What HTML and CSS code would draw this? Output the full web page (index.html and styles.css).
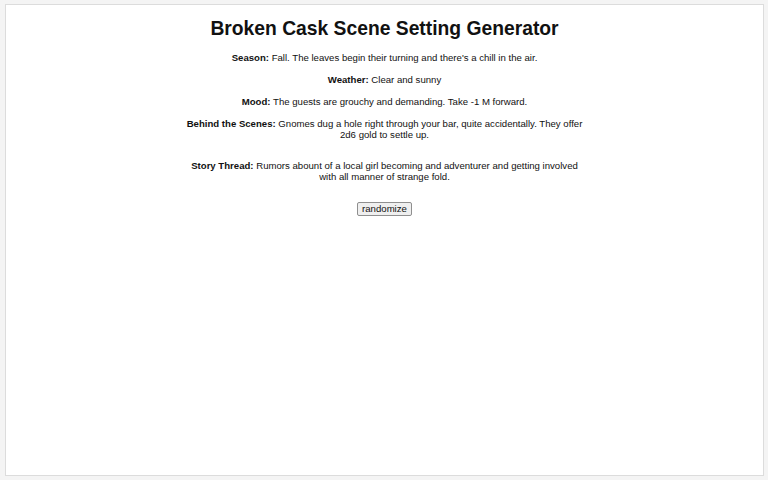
FILE: index.html
```html
<!DOCTYPE html>
<html lang="en-US">
<head>
    <meta charset="UTF-8">
    <title>Broken Cask Scene Setting Generator</title>
    <link rel="stylesheet" href="styles.css">
</head>
<body>
    <div class="page">
        <h1 class="title">Broken Cask Scene Setting Generator</h1>
        <div class="scene">
            <p><b>Season:</b> Fall. The leaves begin their turning and there's a chill in the air.</p>
            <p><b>Weather:</b> Clear and sunny</p>
            <p><b>Mood:</b> The guests are grouchy and demanding. Take -1 M forward.</p>
            <p><b>Behind the Scenes:</b> Gnomes dug a hole right through your bar, quite accidentally. They offer 2d6 gold to settle up.</p>
            <p class="thread"><b>Story Thread:</b> Rumors abount of a local girl becoming and adventurer and getting involved with all manner of strange fold.</p>
            <div class="actions">
                <button class="roll-btn">randomize</button>
            </div>
        </div>
    </div>
</body>
</html>
```

FILE: styles.css
```css
html, body {
    height: 100%;
}

body {
    margin: 0;
    padding: 4px 4px 4px 5px;
    box-sizing: border-box;
    background-color: #f4f4f4;
    font-family: 'Liberation Sans', Arial, sans-serif;
    color: #111;
}

.page {
    height: 100%;
    box-sizing: border-box;
    background-color: #fff;
    border: 1px solid #dcdcdc;
    text-align: center;
}

.title {
    font-size: 19.3px;
    margin: 13px 0 12px;
}

.scene {
    max-width: 400px;
    margin: 0 auto;
    font-size: 9.6px;
    line-height: 11px;
}

.scene p {
    margin: 11px 0;
}

/* blank line before the story thread */
.scene p.thread {
    margin-top: 20px;
}

.actions {
    margin-top: 20px;
}

.roll-btn {
    font-family: 'Liberation Sans', Arial, sans-serif;
    font-size: 9.6px;
    line-height: 10px;
    padding: 1px 4px;
    color: #111;
    background-color: #efefef;
    border: 1px solid #8f8f8f;
    border-radius: 2px;
}
```
